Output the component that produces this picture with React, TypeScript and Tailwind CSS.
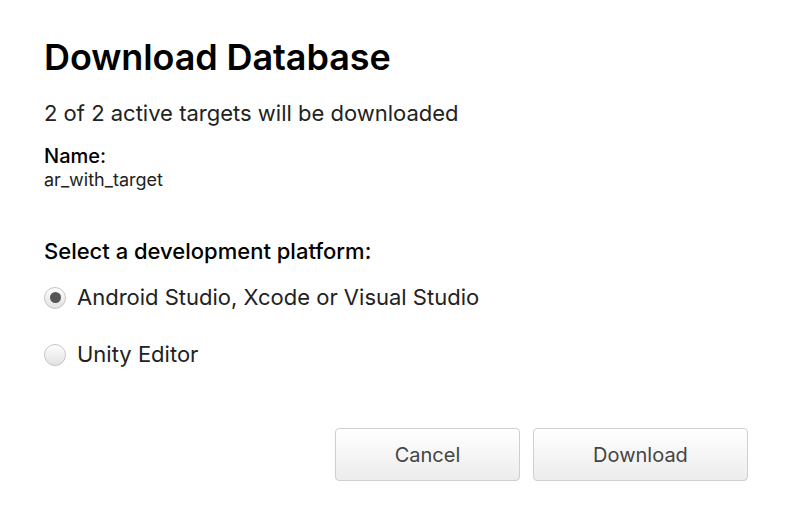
import { useState } from 'react';

const PLATFORMS = ['Android Studio, Xcode or Visual Studio', 'Unity Editor'];

function Radio({ checked }: { checked: boolean }) {
  return (
    <span className="flex h-[22px] w-[22px] shrink-0 items-center justify-center rounded-full border border-[#c4c4c4] bg-gradient-to-b from-[#fdfdfd] to-[#e2e2e2] shadow-[inset_0_1px_1px_rgba(255,255,255,0.9)]">
      {checked && <span className="h-[11px] w-[11px] rounded-full bg-[#555555]" />}
    </span>
  );
}

export default function App() {
  const [platform, setPlatform] = useState(0);

  return (
    <div className="h-[522px] w-[796px] bg-white px-[44px] pt-[34px] text-black" style={{ fontFamily: 'Inter, "Noto Sans", sans-serif' }}>
      <h1 className="text-[36px] font-semibold leading-[46px] tracking-[-0.1px]">Download Database</h1>
      <p className="mt-[19px] text-[22px] leading-[28px] text-[#222]">2 of 2 active targets will be downloaded</p>

      <div className="mt-[17px]">
        <div className="text-[20px] font-medium leading-[24px]">Name:</div>
        <div className="mt-[1px] text-[18px] leading-[22px] text-[#222]">ar_with_target</div>
      </div>

      <div className="mt-[46px] text-[22px] font-medium leading-[28px]">Select a development platform:</div>

      <div className="mt-[19px] flex flex-col gap-[30px]">
        {PLATFORMS.map((p, i) => (
          <label key={p} className="flex cursor-pointer items-center gap-[11px]" onClick={() => setPlatform(i)}>
            <Radio checked={platform === i} />
            <span className="text-[22px] leading-[27px] text-[#222]">{p}</span>
          </label>
        ))}
      </div>

      <div className="mt-[60px] flex justify-end gap-[13px] pr-[4px]">
        <button className="h-[53px] w-[185px] rounded-[4px] border border-[#cfcfcf] bg-gradient-to-b from-white to-[#ececec] text-[20px] text-[#444]">Cancel</button>
        <button className="h-[53px] w-[215px] rounded-[4px] border border-[#cfcfcf] bg-gradient-to-b from-white to-[#ececec] text-[20px] text-[#444]">Download</button>
      </div>
    </div>
  );
}
